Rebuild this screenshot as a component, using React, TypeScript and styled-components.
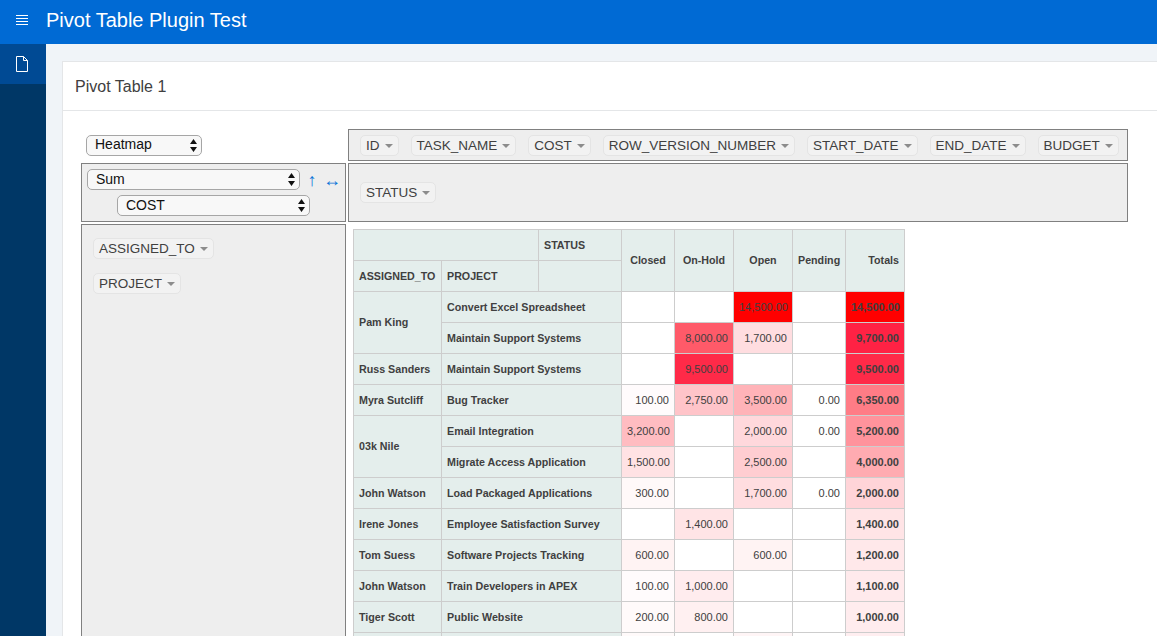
import styled, { createGlobalStyle } from "styled-components";

const GlobalStyle = createGlobalStyle`
  html, body {
    margin: 0;
    height: 100%;
    overflow: hidden;
    font-family: "Liberation Sans", Arial, sans-serif;
  }
`;

const unusedFields = ["ID", "TASK_NAME", "COST", "ROW_VERSION_NUMBER", "START_DATE", "END_DATE", "BUDGET"];

// [value, heat colour]
type Cell = [string, string] | null;

interface Row {
  name?: string;
  span?: number;
  project: string;
  cells: Cell[];
  total: [string, string];
}

const rows: Row[] = [
  {
    name: "Pam King",
    span: 2,
    project: "Convert Excel Spreadsheet",
    cells: [null, null, ["14,500.00", "#ff0000"], null],
    total: ["14,500.00", "#ff0000"],
  },
  {
    project: "Maintain Support Systems",
    cells: [null, ["8,000.00", "#ff5a69"], ["1,700.00", "#ffdde0"], null],
    total: ["9,700.00", "#ff2244"],
  },
  {
    name: "Russ Sanders",
    project: "Maintain Support Systems",
    cells: [null, ["9,500.00", "#ff2a48"], null, null],
    total: ["9,500.00", "#ff2a48"],
  },
  {
    name: "Myra Sutcliff",
    project: "Bug Tracker",
    cells: [["100.00", "#fffbfc"], ["2,750.00", "#ffc4c9"], ["3,500.00", "#ffb3b8"], ["0.00", "#ffffff"]],
    total: ["6,350.00", "#ff7c86"],
  },
  {
    name: "03k Nile",
    span: 2,
    project: "Email Integration",
    cells: [["3,200.00", "#ffbcc1"], null, ["2,000.00", "#ffd8dc"], ["0.00", "#ffffff"]],
    total: ["5,200.00", "#ff939c"],
  },
  {
    project: "Migrate Access Application",
    cells: [["1,500.00", "#ffe2e4"], null, ["2,500.00", "#ffcdd1"], null],
    total: ["4,000.00", "#ffabb1"],
  },
  {
    name: "John Watson",
    project: "Load Packaged Applications",
    cells: [["300.00", "#fff9f9"], null, ["1,700.00", "#ffdde0"], ["0.00", "#ffffff"]],
    total: ["2,000.00", "#ffd4d8"],
  },
  {
    name: "Irene Jones",
    project: "Employee Satisfaction Survey",
    cells: [null, ["1,400.00", "#ffe4e6"], null, null],
    total: ["1,400.00", "#ffe4e6"],
  },
  {
    name: "Tom Suess",
    project: "Software Projects Tracking",
    cells: [["600.00", "#fff3f3"], null, ["600.00", "#fff3f3"], null],
    total: ["1,200.00", "#ffe8ea"],
  },
  {
    name: "John Watson",
    project: "Train Developers in APEX",
    cells: [["100.00", "#fffbfc"], ["1,000.00", "#ffecee"], null, null],
    total: ["1,100.00", "#ffeaec"],
  },
  {
    name: "Tiger Scott",
    project: "Public Website",
    cells: [["200.00", "#fffafa"], ["800.00", "#fff0f1"], null, null],
    total: ["1,000.00", "#ffecee"],
  },
  // only the top edge of this row is on screen, its text is below the fold
  {
    name: " ",
    project: "",
    cells: [["", "#fffafa"], null, ["", "#fff5f6"], null],
    total: ["", "#ffeef0"],
  },
];

const MenuIcon = () => (
  <svg width="12" height="10" viewBox="0 0 12 10" fill="none" stroke="#fff" strokeWidth="1">
    <path d="M0 .5h12M0 3.5h12M0 6.5h12M0 9.5h12" />
  </svg>
);

const PageIcon = () => (
  <svg width="12" height="16" viewBox="0 0 12 16" fill="none" stroke="#fff" strokeWidth="1">
    <path d="M.5.5h7l4 4v11H.5zM7.5.5v4h4" />
  </svg>
);

const Chooser = ({ value, wide }: { value: string; wide: number }) => (
  <SelectBox $width={wide}>
    <span>{value}</span>
    <svg width="7" height="13" viewBox="0 0 7 13" fill="#111">
      <path d="M3.5 0 7 5H0zM0 8h7l-3.5 5z" />
    </svg>
  </SelectBox>
);

export default function App() {
  return (
    <Page>
      <GlobalStyle />
      <Header>
        <MenuButton>
          <MenuIcon />
        </MenuButton>
        <Title>Pivot Table Plugin Test</Title>
      </Header>
      <Body>
        <Sidebar>
          <NavItem>
            <PageIcon />
          </NavItem>
        </Sidebar>
        <Content>
          <Card>
            <CardHeader>Pivot Table 1</CardHeader>
            <PivotUi>
              <RendererCell>
                <Chooser value="Heatmap" wide={116} />
              </RendererCell>
              <FieldsBar>
                {unusedFields.map((field) => (
                  <Pill key={field}>
                    {field}
                    <Caret />
                  </Pill>
                ))}
              </FieldsBar>
              <AggregatorCell>
                <AggregatorRow>
                  <Chooser value="Sum" wide={213} />
                  <UpArrow>↑</UpArrow>
                  <SideArrow>↔</SideArrow>
                </AggregatorRow>
                <ValueRow>
                  <Chooser value="COST" wide={193} />
                </ValueRow>
              </AggregatorCell>
              <ColsBar>
                <Pill>
                  STATUS
                  <Caret />
                </Pill>
              </ColsBar>
              <RowsBar>
                <Pill>
                  ASSIGNED_TO
                  <Caret />
                </Pill>
                <Pill>
                  PROJECT
                  <Caret />
                </Pill>
              </RowsBar>
              <Output>
                <PivotTable>
                  <colgroup>
                    <col width="88" />
                    <col width="97" />
                    <col width="83" />
                    <col width="53" />
                    <col width="59" />
                    <col width="59" />
                    <col width="53" />
                    <col width="59" />
                  </colgroup>
                  <thead>
                    <tr>
                      <Head colSpan={2} />
                      <Head>STATUS</Head>
                      <ColHead rowSpan={2}>Closed</ColHead>
                      <ColHead rowSpan={2}>On-Hold</ColHead>
                      <ColHead rowSpan={2}>Open</ColHead>
                      <ColHead rowSpan={2}>Pending</ColHead>
                      <ColHead rowSpan={2} $right>
                        Totals
                      </ColHead>
                    </tr>
                    <tr>
                      <Head>ASSIGNED_TO</Head>
                      <Head>PROJECT</Head>
                      <Head />
                    </tr>
                  </thead>
                  <tbody>
                    {rows.map((row, i) => (
                      <tr key={i}>
                        {row.name && (row.span ? <NameHead rowSpan={row.span}>{row.name}</NameHead> : <Head>{row.name}</Head>)}
                        <Head colSpan={2}>{row.project}</Head>
                        {row.cells.map((cell, j) => (
                          <Value key={j} $bg={cell ? cell[1] : "#fff"}>
                            {cell ? cell[0] : ""}
                          </Value>
                        ))}
                        <Total $bg={row.total[1]}>{row.total[0]}</Total>
                      </tr>
                    ))}
                  </tbody>
                </PivotTable>
              </Output>
            </PivotUi>
          </Card>
        </Content>
      </Body>
    </Page>
  );
}

const Page = styled.div`
  display: flex;
  flex-direction: column;
  height: 100vh;
  overflow: hidden;
`;

const Header = styled.header`
  display: flex;
  align-items: center;
  box-sizing: border-box;
  flex: 0 0 44px;
  padding-bottom: 4px;
  background-color: #006ad4;
  color: #fff;
`;

const MenuButton = styled.div`
  display: flex;
  box-sizing: border-box;
  width: 46px;
  padding-left: 16px;
`;

const Title = styled.h1`
  margin: 0;
  font-size: 20px;
  font-weight: 400;
`;

const Body = styled.div`
  display: flex;
  flex: 1;
  min-height: 0;
`;

const Sidebar = styled.nav`
  flex: 0 0 46px;
  background-color: #003766;
`;

const NavItem = styled.div`
  display: flex;
  align-items: center;
  height: 40px;
  padding-left: 16px;
  background-color: #004a94;
`;

const Content = styled.main`
  flex: 1;
  min-width: 0;
  padding: 17px 0 0 16px;
  background-color: #f0f4f8;
`;

const Card = styled.section`
  margin-right: -20px;
  background-color: #fff;
  border: 1px solid #e4e6e8;
`;

const CardHeader = styled.div`
  padding: 0 12px;
  height: 48px;
  line-height: 49px;
  border-bottom: 1px solid #e4e6e8;
  color: #404040;
  font-size: 16px;
`;

const PivotUi = styled.div`
  display: grid;
  grid-template-columns: 265px 780px;
  grid-template-rows: 32px 59px auto;
  gap: 2px;
  padding: 18px 0 0 18px;
`;

const RendererCell = styled.div`
  display: flex;
  align-items: center;
  padding-left: 5px;
`;

const Panel = styled.div`
  box-sizing: border-box;
  background-color: #eeeeee;
  border: 1px solid #808080;
`;

const FieldsBar = styled(Panel)`
  display: flex;
  align-items: center;
  gap: 12px;
  padding: 0 11px;

  > div {
    padding-bottom: 0;
  }
`;

const AggregatorCell = styled(Panel)`
  display: flex;
  flex-direction: column;
  gap: 5px;
  padding: 5px 0 0 5px;
`;

const AggregatorRow = styled.div`
  display: flex;
  align-items: center;
`;

const ValueRow = styled.div`
  padding-left: 30px;
`;

const UpArrow = styled.span`
  margin-left: 6px;
  width: 12px;
  color: #0a74d8;
  font-size: 18px;
  line-height: 20px;
  text-align: center;
`;

const SideArrow = styled(UpArrow)`
  margin-left: 4px;
  width: 20px;
`;

const ColsBar = styled(Panel)`
  display: flex;
  align-items: center;
  padding: 0 11px;
`;

const RowsBar = styled(Panel)`
  display: flex;
  flex-direction: column;
  align-items: flex-start;
  gap: 14px;
  height: 500px;
  padding: 13px 11px;

  > div:last-child {
    padding-bottom: 0;
  }
`;

const SelectBox = styled.div<{ $width: number }>`
  display: flex;
  align-items: center;
  justify-content: space-between;
  box-sizing: border-box;
  width: ${(p) => p.$width}px;
  height: 21px;
  padding: 0 4px 0 8px;
  background-color: #f8f8f8;
  border: 1px solid #a6a6a6;
  border-radius: 5px;
  color: #111;
  font-size: 14px;

  span {
    margin-top: -2px;
  }
`;

const Pill = styled.div`
  display: flex;
  align-items: center;
  box-sizing: border-box;
  height: 21px;
  padding: 0 5px 1px;
  background-color: #f2f2f2;
  border: 1px solid #e4e4e4;
  border-radius: 5px;
  color: #404040;
  font-size: 13.5px;
`;

const Caret = styled.span`
  margin-left: 5px;
  margin-top: 1px;
  border-left: 4px solid transparent;
  border-right: 4px solid transparent;
  border-top: 4px solid #8c8c8c;
`;

const Output = styled.div`
  padding: 5px 0 0 5px;
`;

const PivotTable = styled.table`
  table-layout: fixed;
  border-collapse: collapse;
  width: 552px;
  color: #404040;
  font-size: 11px;
  line-height: 14px;
`;

const Head = styled.th`
  height: 30px;
  padding: 0 5px;
  background-color: #e4eeec;
  border: 1px solid #cdcdcd;
  font-size: 10.7px;
  font-weight: 700;
  text-align: left;
  white-space: nowrap;
`;

const ColHead = styled(Head)<{ $right?: boolean }>`
  padding-bottom: 2px;
  text-align: ${(p) => (p.$right ? "right" : "center")};
`;

const NameHead = styled(Head)`
  padding-bottom: 2px;
`;

const Value = styled.td<{ $bg: string }>`
  height: 30px;
  padding: 0 5px;
  background-color: ${(p) => p.$bg};
  border: 1px solid #cdcdcd;
  text-align: right;
  white-space: nowrap;
`;

const Total = styled(Value)`
  font-weight: 700;
`;
